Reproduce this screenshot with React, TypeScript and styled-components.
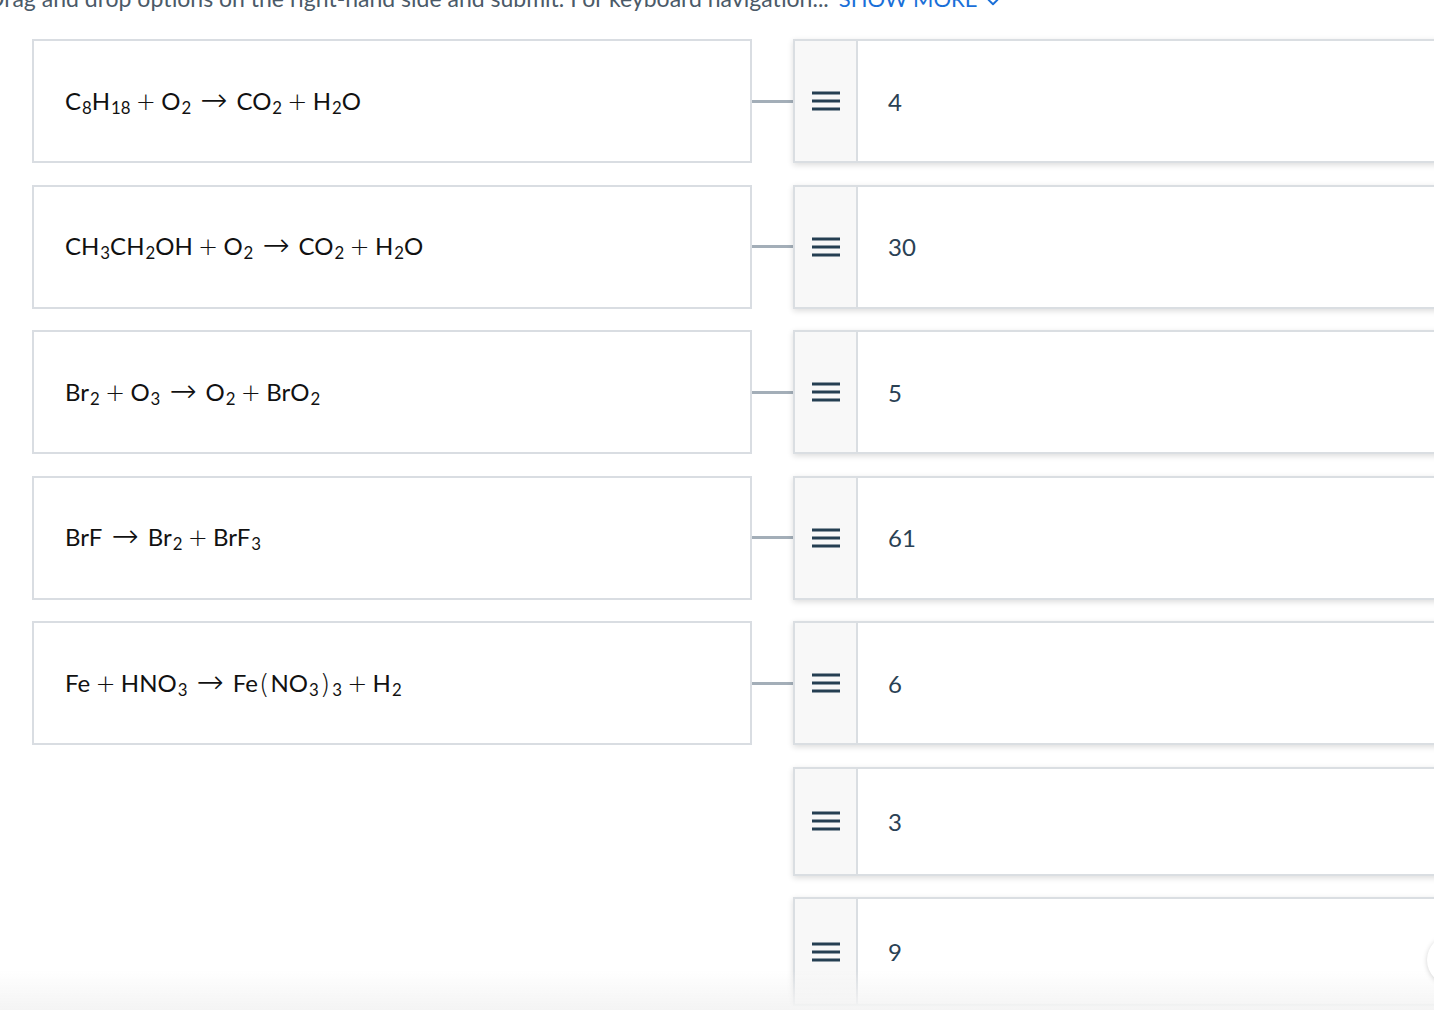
import React from "react";
import styled, { createGlobalStyle } from "styled-components";
import { ChevronDown } from "lucide-react";

const GlobalStyle = createGlobalStyle`
  html, body {
    margin: 0;
    padding: 0;
    background: #ffffff;
    overflow: hidden;
  }
  body {
    font-family: Lato, "Open Sans", sans-serif;
  }
`;

type Pair = { formula?: string; value: string };

const pairs: Pair[] = [
  { formula: "C_8H_{18} + O_2 → CO_2 + H_2O", value: "4" },
  { formula: "CH_3CH_2OH + O_2 → CO_2 + H_2O", value: "30" },
  { formula: "Br_2 + O_3 → O_2 + BrO_2", value: "5" },
  { formula: "BrF → Br_2 + BrF_3", value: "61" },
  { formula: "Fe + HNO_3 → Fe(NO_3)_3 + H_2", value: "6" },
  { value: "3" },
  { value: "9" },
];

// splits plain chemistry text so brackets get their own glyph style
const plain = (text: string, key: string) =>
  text.split(/([()])/).filter(Boolean).map((s, j) =>
    s === "(" || s === ")" ? <Paren key={key + "p" + j}>{s}</Paren> : <Chem key={key + "c" + j}>{s}</Chem>
  );

// turns "H_{18}O" into text and subscript pieces
const renderChem = (term: string, key: string) => {
  const out: React.ReactNode[] = [];
  const re = /_(\{[^}]+\}|.)/g;
  let last = 0;
  let m: RegExpExecArray | null;
  let i = 0;
  while ((m = re.exec(term))) {
    if (m.index > last) out.push(...plain(term.slice(last, m.index), key + i++));
    out.push(<Sub key={key + i++}>{m[1].replace(/[{}]/g, "")}</Sub>);
    last = m.index + m[0].length;
  }
  if (last < term.length) out.push(...plain(term.slice(last), key + i++));
  return out;
};

const Formula = ({ source }: { source: string }) => {
  const tokens = source.split(" ");
  return (
    <Math>
      {tokens.map((t, i) =>
        t === "+" ? (
          <Op key={i}>+</Op>
        ) : t === "→" ? (
          <Arrow key={i}>→</Arrow>
        ) : (
          <React.Fragment key={i}>{renderChem(t, i + "-")}</React.Fragment>
        )
      )}
    </Math>
  );
};

const Handle = () => (
  <HandleCell>
    <svg width="28" height="20" viewBox="0 0 28 20">
      <rect x="0" y="0.5" width="28" height="3" fill="#253f52" />
      <rect x="0" y="8.5" width="28" height="3" fill="#253f52" />
      <rect x="0" y="16.5" width="28" height="3" fill="#253f52" />
    </svg>
  </HandleCell>
);

export default function App() {
  return (
    <Page>
      <GlobalStyle />
      <Instructions>
        Drag and drop options on the right-hand side and submit. For keyboard navigation...
        <ShowMore>
          SHOW MORE
          <ChevronDown size={18} strokeWidth={2.5} />
        </ShowMore>
      </Instructions>
      <List>
        {pairs.map((p, i) => (
          <Row key={i} $height={p.formula ? 124 : 109}>
            {p.formula ? (
              <>
                <PromptCard>
                  <Formula source={p.formula} />
                </PromptCard>
                <Connector />
              </>
            ) : (
              <Spacer />
            )}
            <AnswerCard>
              <Handle />
              <Value>{p.value}</Value>
            </AnswerCard>
          </Row>
        ))}
      </List>
      <BottomFade />
      <FloatButton />
    </Page>
  );
}

const Page = styled.div`
  padding-left: 32px;
  min-height: 1010px;
`;

const Instructions = styled.p`
  margin: -15px 0 0 -45px;
  height: 26px;
  font-size: 23px;
  line-height: 26px;
  color: #4b5a68;
  white-space: nowrap;
`;

const ShowMore = styled.span`
  display: inline-flex;
  align-items: center;
  gap: 6px;
  margin-left: 10px;
  color: #1a6fd8;
  font-size: 22px;
  svg {
    margin-top: 6px;
  }
`;

const List = styled.div`
  display: flex;
  flex-direction: column;
  gap: 21.5px;
  margin-top: 28px;
`;

const Row = styled.div<{ $height: number }>`
  display: flex;
  align-items: center;
  height: ${(p) => p.$height}px;
`;

const PromptCard = styled.div`
  box-sizing: border-box;
  flex: none;
  width: 720px;
  height: 100%;
  display: flex;
  align-items: center;
  padding-left: 31px;
  border: 2px solid #d9dde2;
  background: #ffffff;
`;

const Connector = styled.div`
  flex: none;
  width: 41px;
  height: 3px;
  background: #a3aeb8;
`;

const Spacer = styled.div`
  flex: none;
  width: 761px;
`;

const AnswerCard = styled.div`
  box-sizing: border-box;
  flex: none;
  width: 700px;
  height: 100%;
  display: flex;
  border: 2px solid #dadee2;
  background: #ffffff;
  box-shadow: 0 2px 6px rgba(0, 0, 0, 0.14);
`;

const HandleCell = styled.div`
  flex: none;
  width: 61px;
  display: flex;
  align-items: center;
  justify-content: center;
  background: #f8f8f8;
  border-right: 2px solid #dadee2;
`;

const Value = styled.div`
  display: flex;
  align-items: center;
  padding-left: 30px;
  font-size: 24px;
  color: #2a4154;
`;

const Math = styled.span`
  font-family: Lato, "DejaVu Sans", sans-serif;
  font-size: 24px;
  color: #111111;
  white-space: nowrap;
  line-height: 1;
`;

const Chem = styled.span``;

const Paren = styled.span`
  display: inline-block;
  margin: 0 1px;
  font-family: "DejaVu Sans", sans-serif;
  font-weight: 200;
  font-size: 1.12em;
  transform: translateY(1px);
`;

const Sub = styled.span`
  font-size: 0.7em;
  position: relative;
  top: 0.25em;
  margin-left: 1px;
`;

const Op = styled.span`
  margin: 0 0.22em;
  font-family: "DejaVu Sans", sans-serif;
  font-weight: 200;
  font-size: 1em;
`;

const Arrow = styled.span`
  display: inline-block;
  margin: 0 0.28em;
  font-family: "DejaVu Sans", sans-serif;
  font-weight: 200;
  font-size: 1.35em;
  line-height: 0;
  transform: translateY(1px);
`;

const BottomFade = styled.div`
  position: fixed;
  left: 0;
  right: 0;
  bottom: 0;
  height: 40px;
  background: linear-gradient(rgba(244, 244, 244, 0), rgba(244, 244, 244, 1));
  pointer-events: none;
`;

const FloatButton = styled.div`
  position: fixed;
  right: -43px;
  top: 935px;
  width: 50px;
  height: 50px;
  border-radius: 50%;
  background: #ffffff;
  box-shadow: 0 1px 5px rgba(0, 0, 0, 0.18);
`;
